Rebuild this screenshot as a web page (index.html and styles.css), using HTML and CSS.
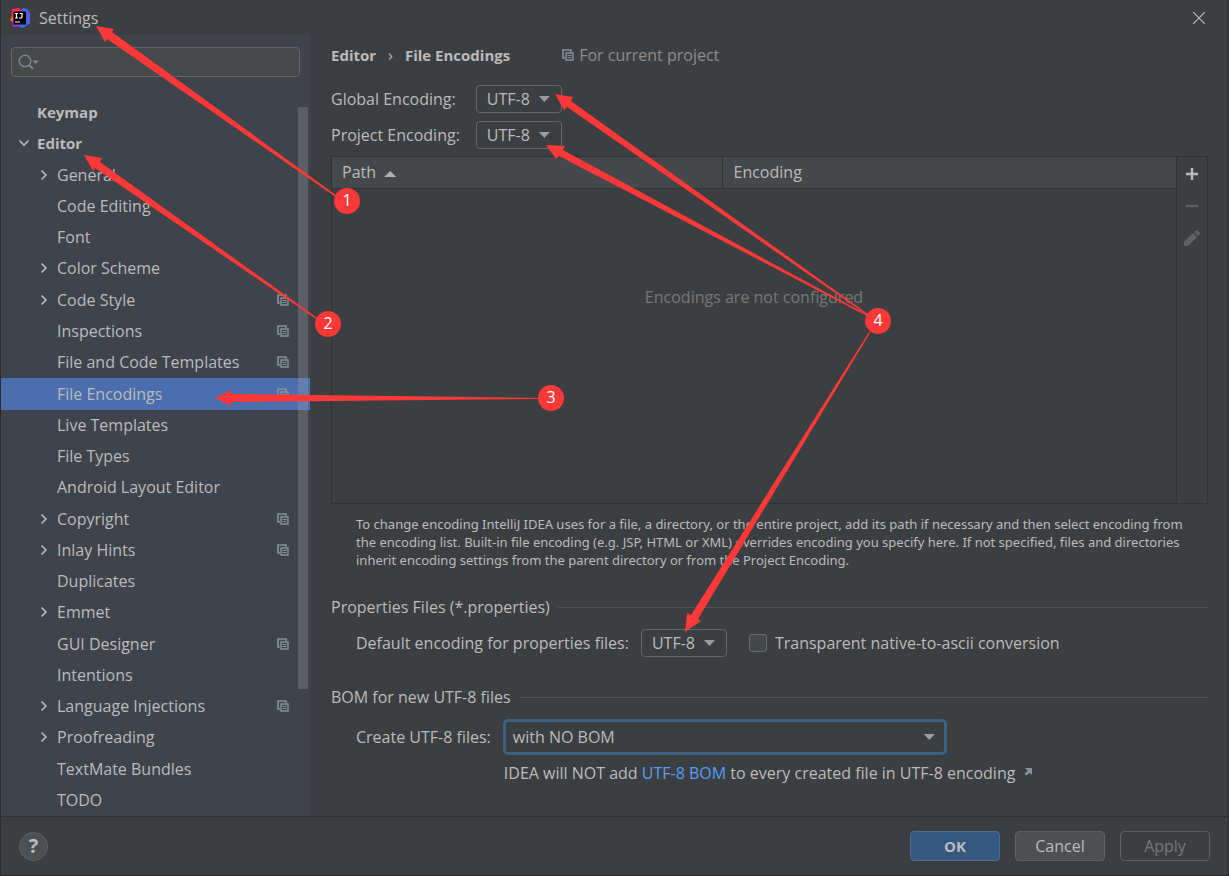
FILE: index.html
```html
<!DOCTYPE html>
<html lang="en">
<head>
  <meta charset="UTF-8" />
  <title>Settings</title>
  <link rel="stylesheet" href="styles.css">
</head>
<body>
  <svg class="sprite" width="0" height="0" aria-hidden="true">
    <symbol id="copy" viewBox="0 0 12 12">
      <path d="M9 3V1H1v8h2" fill="none" stroke="currentColor" stroke-width="1.600" />
      <path d="M4 4h7v7H4z" fill="none" stroke="currentColor" stroke-width="1.400" />
      <path d="M5.500 6.500h4M5.500 8.500h4" stroke="currentColor" />
    </symbol>
    <symbol id="chevron" viewBox="0 0 8 12">
      <path d="M1.500 1.500L6 6l-4.500 4.500" fill="none" stroke="currentColor" stroke-width="1.600" />
    </symbol>
  </svg>

  <div class="window">
    <header class="titlebar">
      <svg class="logo" width="20" height="20" viewBox="0 0 20 20" aria-hidden="true">
        <path d="M2 1l7-1 4 4-3 8-9-1z" fill="#fe2857" />
        <path d="M0 11.500l3-3v6.500z" fill="#fc801d" />
        <path d="M10 3l3-3 4 1 3 4v10l-5 4-3 1-5-3z" fill="#3b6bf0" />
        <path d="M17 4l3 1v6l-4 3z" fill="#5c5ae0" />
        <path d="M2 13l4-1 4 6-7 1z" fill="#b02fd0" />
        <path d="M3.500 3.500h12.500v13H3.500z" fill="#000" />
        <path d="M5 5.500h3M6.500 5.500V10M5 10h3M9.500 5.500h2.500V9q0 1-1 1H9M5 14h5" fill="none" stroke="#fff" stroke-width="1.200" />
      </svg>
      <h1 class="title">Settings</h1>
      <button class="close" aria-label="Close">
        <svg width="12" height="12" viewBox="0 0 12 12"><path d="M0 0l12 12M12 0L0 12" stroke="currentColor" stroke-width="1.200" /></svg>
      </button>
    </header>

    <div class="content">
      <aside class="sidebar">
        <div class="search">
          <svg class="search-icon" width="22" height="16" viewBox="0 0 22 16" aria-hidden="true">
            <circle cx="7" cy="7" r="5.700" fill="none" stroke="currentColor" stroke-width="1.400" />
            <path d="M11 11l4 4" stroke="currentColor" stroke-width="2" />
            <path d="M14.500 6.500h6L17.500 10z" fill="currentColor" />
          </svg>
          <input class="search-input" type="text" aria-label="Search settings">
        </div>
        <ul class="tree">
          <li class="row top">Keymap</li>
          <li class="row top open"><svg class="arrow"><use href="#chevron" /></svg>Editor</li>
          <li class="row"><svg class="arrow"><use href="#chevron" /></svg>General</li>
          <li class="row">Code Editing</li>
          <li class="row">Font</li>
          <li class="row"><svg class="arrow"><use href="#chevron" /></svg>Color Scheme</li>
          <li class="row"><svg class="arrow"><use href="#chevron" /></svg>Code Style<svg class="copy"><use href="#copy" /></svg></li>
          <li class="row">Inspections<svg class="copy"><use href="#copy" /></svg></li>
          <li class="row">File and Code Templates<svg class="copy"><use href="#copy" /></svg></li>
          <li class="row selected">File Encodings<svg class="copy"><use href="#copy" /></svg></li>
          <li class="row">Live Templates</li>
          <li class="row">File Types</li>
          <li class="row">Android Layout Editor</li>
          <li class="row"><svg class="arrow"><use href="#chevron" /></svg>Copyright<svg class="copy"><use href="#copy" /></svg></li>
          <li class="row"><svg class="arrow"><use href="#chevron" /></svg>Inlay Hints<svg class="copy"><use href="#copy" /></svg></li>
          <li class="row">Duplicates</li>
          <li class="row"><svg class="arrow"><use href="#chevron" /></svg>Emmet</li>
          <li class="row">GUI Designer<svg class="copy"><use href="#copy" /></svg></li>
          <li class="row">Intentions</li>
          <li class="row"><svg class="arrow"><use href="#chevron" /></svg>Language Injections<svg class="copy"><use href="#copy" /></svg></li>
          <li class="row"><svg class="arrow"><use href="#chevron" /></svg>Proofreading</li>
          <li class="row">TextMate Bundles</li>
          <li class="row">TODO</li>
        </ul>
        <div class="scrollbar"></div>
      </aside>

      <main class="main">
        <div class="breadcrumb">
          <span class="crumb">Editor</span>
          <span class="crumb-sep">›</span>
          <span class="crumb">File Encodings</span>
          <span class="scope"><svg class="copy"><use href="#copy" /></svg>For current project</span>
        </div>

        <div class="encodings">
          <label for="globalEncoding">Global Encoding:</label>
          <span class="dropdown"><select id="globalEncoding"><option>UTF-8</option></select></span>
          <label for="projectEncoding">Project Encoding:</label>
          <span class="dropdown"><select id="projectEncoding"><option>UTF-8</option></select></span>
        </div>

        <div class="panel">
          <table class="paths">
            <thead>
              <tr>
                <th class="path">Path <span class="sort"></span></th>
                <th>Encoding</th>
              </tr>
            </thead>
            <tbody>
              <tr><td class="empty" colspan="2">Encodings are not configured</td></tr>
            </tbody>
          </table>
          <div class="tools">
            <button class="tool" aria-label="Add">
              <svg width="12" height="12" viewBox="0 0 12 12"><path d="M6 0v12M0 6h12" stroke="currentColor" stroke-width="2.400" /></svg>
            </button>
            <button class="tool" aria-label="Remove" disabled>
              <svg width="12" height="12" viewBox="0 0 12 12"><path d="M0 6h12" stroke="currentColor" stroke-width="2.400" /></svg>
            </button>
            <button class="tool" aria-label="Edit" disabled>
              <svg width="16" height="16" viewBox="0 0 16 16"><path d="M0 16v-4L9 3l4 4-9 9zM10 2l1.500-1.500q1-1 2 0l2 2q1 1 0 2L14 6z" fill="currentColor" /></svg>
            </button>
          </div>
        </div>

        <p class="note">To change encoding IntelliJ IDEA uses for a file, a directory, or the entire project, add its path if necessary and then select encoding from the encoding list. Built-in file encoding (e.g. JSP, HTML or XML) overrides encoding you specify here. If not specified, files and directories inherit encoding settings from the parent directory or from the Project Encoding.</p>

        <h2 class="section">Properties Files (*.properties)</h2>
        <div class="field">
          <label for="propsEncoding">Default encoding for properties files:</label>
          <span class="dropdown"><select id="propsEncoding"><option>UTF-8</option></select></span>
          <label class="check"><input type="checkbox">Transparent native-to-ascii conversion</label>
        </div>

        <h2 class="section">BOM for new UTF-8 files</h2>
        <div class="field bom">
          <label for="bom">Create UTF-8 files:</label>
          <span class="dropdown wide"><select id="bom"><option>with NO BOM</option></select></span>
          <p class="hint">IDEA will NOT add <a href="#">UTF-8 BOM</a> to every created file in UTF-8 encoding
            <svg class="external" width="8" height="8" viewBox="0 0 8 8" aria-hidden="true"><path d="M1 0h7v7L5.700 4.700 2.500 7.500.5 6l3.200-3.200z" fill="currentColor" /></svg>
          </p>
        </div>
      </main>
    </div>

    <footer class="footer">
      <button class="help" aria-label="Help">?</button>
      <button class="btn primary">OK</button>
      <button class="btn">Cancel</button>
      <button class="btn" disabled>Apply</button>
    </footer>
  </div>

  <!-- numbered pointers over the dialog -->
  <svg class="marks" width="1229" height="876" viewBox="0 0 1229 876">
    <path d="M96 26L114 29 112 32 340 198 340 200 107 39 105 42z" />
    <path d="M84 155L102 158 100 162 320 320 319 321 95 168 93 171z" />
    <path d="M215 398L231 390V394L540 398V399L231 402V406z" />
    <path d="M555 94L573 97 571 101 868 314 867 315 567 107 564 110z" />
    <path d="M546 145L565 146 563 150 868 315 867 316 559 156 556 159z" />
    <path d="M685 632L687 613 691 615 869 332 870 333 698 619 701 621z" />
    <circle cx="347" cy="201" r="13" />
    <circle cx="328" cy="324" r="13" />
    <circle cx="551" cy="398" r="13" />
    <circle cx="878" cy="321" r="13" />
    <text x="347" y="206">1</text>
    <text x="328" y="329">2</text>
    <text x="551" y="403">3</text>
    <text x="878" y="326">4</text>
  </svg>
</body>
</html>
```
FILE: styles.css
```css
* {
  box-sizing: border-box;
}

body {
  margin: 0;
  background-color: #3c3f41;
  color: #bbbbbb;
  font-family: "Open Sans", "Noto Sans", sans-serif;
  font-size: 16px;
  line-height: 20px;
}

button,
input,
select {
  font: inherit;
  color: inherit;
}

.sprite {
  position: absolute;
}

.window {
  display: flex;
  flex-direction: column;
  height: 100vh;
  border: 1px solid #2b2b2b;
  border-top: none;
}

.titlebar {
  display: flex;
  align-items: center;
  gap: 9px;
  height: 35px;
  padding: 0 23px 0 9px;
}

.title {
  flex: 1;
  margin: 0;
  font-size: 16px;
  font-weight: normal;
}

.close {
  display: flex;
  padding: 0;
  border: none;
  background: none;
}

.content {
  display: flex;
  flex: 1;
  min-height: 0;
}

/* sidebar */
.sidebar {
  position: relative;
  display: flex;
  flex-direction: column;
  width: 309px;
  background-color: #3f434c;
}

.search {
  display: flex;
  align-items: center;
  height: 30px;
  margin: 12px 10px 20px;
  padding: 0 6px;
  border: 1px solid #646464;
  border-radius: 4px;
  background-color: #45494a;
}

.search-icon {
  color: #7d8790;
}

.search-input {
  flex: 1;
  min-width: 0;
  border: none;
  outline: none;
  background: none;
}

.tree {
  display: flex;
  flex: 1;
  flex-direction: column;
  margin: 0;
  padding: 0;
  list-style: none;
}

.row {
  display: flex;
  flex: 1;
  align-items: center;
  padding: 0 21px 1px 56px;
}

.top {
  padding-left: 36px;
  font-size: 15px;
  font-weight: bold;
}

.selected {
  background-color: #4b6eaf;
}

.arrow {
  width: 8px;
  height: 12px;
  margin-left: -17px;
  margin-right: 9px;
}

.open .arrow {
  transform: rotate(90deg);
}

.copy {
  width: 12px;
  height: 12px;
  color: #87939a;
}

.row .copy {
  margin-left: auto;
}

.scrollbar {
  position: absolute;
  top: 72px;
  right: 2px;
  width: 10px;
  height: 582px;
  background-color: rgba(166, 166, 166, 0.28);
}

/* settings page */
.main {
  display: flex;
  flex: 1;
  flex-direction: column;
  padding: 10px 20px 33px 21px;
}

.breadcrumb {
  display: flex;
  align-items: center;
  gap: 12px;
}

.crumb {
  font-size: 15px;
  font-weight: bold;
}

.scope {
  display: flex;
  align-items: center;
  gap: 5px;
  margin-left: 40px;
  color: #8c8c8c;
}

.encodings {
  display: grid;
  grid-template-columns: max-content max-content;
  align-items: center;
  gap: 8px 16px;
  margin: 20px 0 7px;
}

.dropdown {
  position: relative;
  display: flex;
}

.dropdown::after {
  content: "";
  position: absolute;
  top: 11px;
  right: 12px;
  width: 11px;
  height: 6px;
  background-color: #9a9da0;
  clip-path: polygon(0 0, 100% 0, 50% 100%);
  pointer-events: none;
}

.dropdown select {
  width: 86px;
  height: 28px;
  padding: 0 10px;
  border: 1px solid #646769;
  border-radius: 4px;
  background-color: #3c3f41;
  appearance: none;
}

.panel {
  display: flex;
  flex: 1;
  border: 1px solid #323232;
}

.paths {
  flex: 1;
  border-collapse: collapse;
}

.paths th {
  height: 31px;
  padding: 0 11px;
  border-bottom: 1px solid #323232;
  background-color: #45484a;
  font-weight: normal;
  text-align: left;
}

.paths .path {
  width: 390px;
  padding-left: 10px;
  border-right: 1px solid #323232;
}

.sort {
  display: inline-block;
  width: 12px;
  height: 6px;
  margin-left: 4px;
  background-color: #afb1b3;
  clip-path: polygon(0 100%, 100% 100%, 50% 0);
  vertical-align: middle;
}

.empty {
  padding: 98px 0 0;
  color: #777777;
  text-align: center;
  vertical-align: top;
}

.tools {
  display: flex;
  flex-direction: column;
  align-items: center;
  width: 31px;
  padding-top: 1px;
  border-left: 1px solid #323232;
}

.tool {
  display: flex;
  align-items: center;
  justify-content: center;
  width: 30px;
  height: 32px;
  padding: 0;
  border: none;
  background: none;
}

.tool:disabled {
  color: #5f6162;
}

.note {
  margin: 11px 0 28px;
  padding: 0 12px 0 25px;
  font-family: "Noto Sans", sans-serif;
  font-size: 13px;
  line-height: 18px;
}

.section {
  display: flex;
  align-items: center;
  gap: 8px;
  margin: 0;
  font-size: 16px;
  font-weight: normal;
}

.section::after {
  content: "";
  flex: 1;
  height: 1px;
  background-color: #515151;
}

.field {
  display: flex;
  align-items: center;
  gap: 12px;
  margin: 12px 0 30px 25px;
}

.check {
  display: flex;
  align-items: center;
  gap: 8px;
  margin-left: 10px;
}

.check input {
  width: 18px;
  height: 18px;
  margin: 0;
  border: 1px solid #6b6b6b;
  border-radius: 3px;
  background-color: #43494a;
  appearance: none;
}

.bom {
  display: grid;
  grid-template-columns: max-content 444px;
  gap: 8px 12px;
  margin-bottom: 0;
}

.wide::after {
  top: 15px;
}

.dropdown.wide select {
  width: 100%;
  height: 36px;
  padding: 0 7px;
  border: 3px solid #3d6185;
  border-radius: 5px;
}

.hint {
  grid-column: 2;
  margin: 0 -200px 0 1px;
}

.hint a {
  color: #589df6;
  text-decoration: none;
}

.external {
  margin-left: 4px;
  color: #87939a;
  vertical-align: 3px;
}

/* bottom bar */
.footer {
  display: flex;
  align-items: center;
  gap: 15px;
  height: 59px;
  padding: 0 18px;
  border-top: 1px solid #323232;
}

.help {
  width: 29px;
  height: 29px;
  margin-right: auto;
  padding: 0;
  border: 1px solid #5e6060;
  border-radius: 50%;
  background-color: #4c5052;
  font-size: 20px;
  font-weight: bold;
}

.btn {
  width: 90px;
  height: 30px;
  padding: 0;
  border: 1px solid #5e6060;
  border-radius: 4px;
  background-color: #4c5052;
}

.primary {
  border-color: #4c708c;
  background-color: #365880;
  font-size: 15px;
  font-weight: bold;
}

.btn:disabled {
  background-color: #3c3f41;
  color: #777777;
}

.marks {
  position: absolute;
  top: 0;
  left: 0;
  fill: #fc3838;
  pointer-events: none;
}

.marks text {
  fill: #ffffff;
  font-size: 16px;
  text-anchor: middle;
}
```
